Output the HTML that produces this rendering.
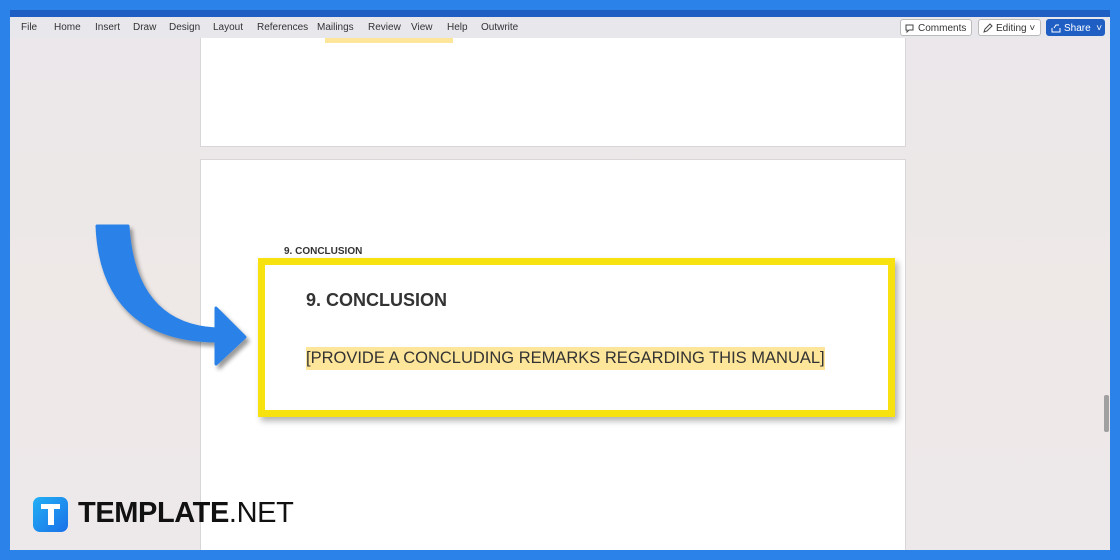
<!DOCTYPE html>
<html><head><meta charset="utf-8"><style>
body{margin:0;width:1120px;height:560px;overflow:hidden;position:relative;font-family:"Liberation Sans",sans-serif;background:#2b82e8}
.bg{position:absolute;left:10px;top:38px;width:1100px;height:512px;background:linear-gradient(180deg,#ebe7ea,#eee9e7 50%,#ede8ea)}
.top2{position:absolute;left:10px;top:10px;width:1100px;height:7px;background:#1f5fc4}
.rib{position:absolute;left:10px;top:17px;width:1100px;height:21px;background:#e8e7ec;font-size:10px;color:#333}
.rib span{position:absolute;top:5px}
.page{position:absolute;background:#fff;border:1px solid #d8d6d8;box-sizing:border-box}
.btn{position:absolute;top:2px;height:17px;border:1px solid #bbb;border-radius:3px;background:#fff;font-size:10px;line-height:17px;color:#333;box-sizing:border-box;padding-left:17px}
</style></head><body>
<div class="top2"></div>
<div class="rib">
<span style="left:11px">File</span><span style="left:44px">Home</span><span style="left:85px">Insert</span><span style="left:123px">Draw</span><span style="left:159px">Design</span><span style="left:203px">Layout</span><span style="left:247px">References</span><span style="left:307px">Mailings</span><span style="left:358px">Review</span><span style="left:401px">View</span><span style="left:437px">Help</span><span style="left:471px">Outwrite</span>
<div class="btn" style="left:890px;width:72px">Comments<svg style="position:absolute;left:4px;top:4px" width="9" height="9"><path d="M1 1h7v5H4L2 8V6H1z" fill="none" stroke="#444"/></svg></div>
<div class="btn" style="left:968px;width:63px">Editing ˅<svg style="position:absolute;left:4px;top:3px" width="10" height="10"><path d="M1 9l1-3 5-5 2 2-5 5z" fill="none" stroke="#444"/></svg></div>
<div class="btn" style="left:1036px;width:59px;background:#1f5fc4;border-color:#1f5fc4;color:#fff">Share &nbsp;˅<svg style="position:absolute;left:4px;top:3px" width="10" height="10"><path d="M1 5v4h8V5M3 5l2-3h3" fill="none" stroke="#fff"/></svg></div>
</div>
<div class="bg"></div>
<div class="page" style="left:200px;top:38px;width:706px;height:109px;border-top:none">
<div style="position:absolute;left:124px;top:0;width:128px;height:5px;background:#fde59a"></div></div>
<div class="page" style="left:200px;top:159px;width:706px;height:400px">
<div style="position:absolute;left:83px;top:86px;font-size:10px;font-weight:bold;color:#333">9. CONCLUSION</div></div>
<div style="position:absolute;left:1104px;top:395px;width:5px;height:37px;background:#a0a0a0;border-radius:2px"></div>
<div style="position:absolute;left:258px;top:258px;width:637px;height:159px;box-sizing:border-box;border:7px solid #f7e20f;background:#fff;box-shadow:3px 4px 6px rgba(0,0,0,.3)">
<div style="position:absolute;left:41px;top:25px;font-size:18px;font-weight:bold;color:#333">9. CONCLUSION</div>
<div style="position:absolute;left:41px;top:82px;font-size:16.5px;color:#333;background:#fde59a;padding:2px 0;white-space:nowrap">[PROVIDE A CONCLUDING REMARKS REGARDING THIS MANUAL]</div>
</div>
<svg style="position:absolute;left:0;top:0" width="300" height="400">
<defs><filter id="s"><feDropShadow dx="3" dy="4" stdDeviation="2" flood-opacity=".4"/></filter></defs>
<path filter="url(#s)" fill="#2b82e8" stroke="#2b82e8" stroke-width="3" stroke-linejoin="round" d="M97 226 L128 226 C132 290 160 326 216 329 L216 308 L245 337 L216 364 L216 341 C140 340 100 300 97 226 Z"/>
</svg>
<div style="position:absolute;left:0;top:550px;width:1120px;height:10px;background:#2b82e8"></div>
<div style="position:absolute;left:33px;top:497px;width:35px;height:35px;border-radius:7px;background:linear-gradient(135deg,#22b0f5,#1a70e8)"><div style="position:absolute;left:8px;top:7px;width:19px;height:5px;background:#fff"></div><div style="position:absolute;left:15px;top:7px;width:6px;height:21px;background:#fff"></div></div>
<div style="position:absolute;left:78px;top:497px;font-size:29px;color:#111;letter-spacing:-0.4px"><b>TEMPLATE</b>.NET</div>
</body></html>
